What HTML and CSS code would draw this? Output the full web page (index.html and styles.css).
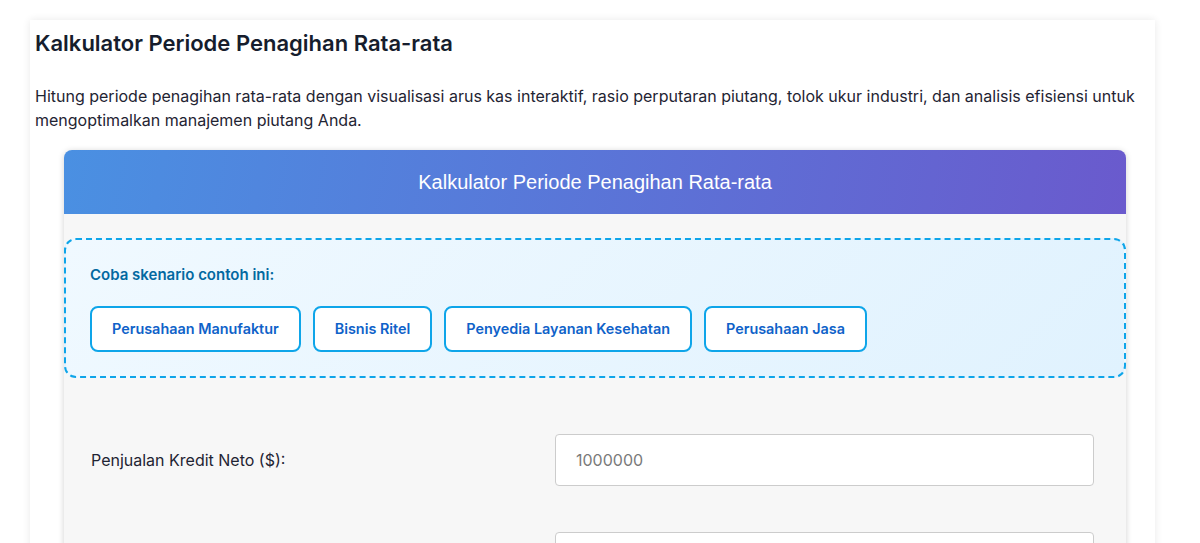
FILE: index.html
```html
<!DOCTYPE html>
<html lang="id">
<head>
<meta charset="utf-8">
<title>Kalkulator Periode Penagihan Rata-rata</title>
<link rel="stylesheet" href="styles.css">
</head>
<body>
<div class="page">
  <h1 class="page-title">Kalkulator Periode Penagihan Rata-rata</h1>
  <p class="page-desc">Hitung periode penagihan rata-rata dengan visualisasi arus kas interaktif, rasio perputaran piutang, tolok ukur industri, dan analisis efisiensi untuk mengoptimalkan manajemen piutang Anda.</p>

  <div class="calc-card">
    <div class="calc-header">Kalkulator Periode Penagihan Rata-rata</div>
    <div class="calc-body">
      <div class="scenarios">
        <div class="scenarios-label">Coba skenario contoh ini:</div>
        <div class="scenario-buttons">
          <button class="scenario-btn">Perusahaan Manufaktur</button>
          <button class="scenario-btn">Bisnis Ritel</button>
          <button class="scenario-btn">Penyedia Layanan Kesehatan</button>
          <button class="scenario-btn">Perusahaan Jasa</button>
        </div>
      </div>

      <div class="form">
        <div class="form-row">
          <label class="form-label">Penjualan Kredit Neto ($):</label>
          <input class="form-input" type="text" placeholder="1000000">
        </div>
        <div class="form-row">
          <label class="form-label">Piutang Usaha Awal ($):</label>
          <input class="form-input" type="text" placeholder="150000">
        </div>
        <div class="form-row">
          <label class="form-label">Piutang Usaha Akhir ($):</label>
          <input class="form-input" type="text" placeholder="170000">
        </div>
        <div class="form-row">
          <label class="form-label">Periode (hari):</label>
          <input class="form-input" type="text" placeholder="365">
        </div>
        <div class="form-row">
          <label class="form-label">Industri:</label>
          <input class="form-input" type="text" placeholder="Manufaktur">
        </div>
        <div class="form-actions">
          <button class="calc-btn">Hitung</button>
        </div>
      </div>

      <div class="results">
        <h2 class="results-title">Hasil</h2>
        <div class="result-grid">
          <div class="result-item"><div class="result-name">Periode Penagihan Rata-rata</div><div class="result-value">58,4 hari</div></div>
          <div class="result-item"><div class="result-name">Rasio Perputaran Piutang</div><div class="result-value">6,25x</div></div>
          <div class="result-item"><div class="result-name">Piutang Rata-rata</div><div class="result-value">$160.000</div></div>
          <div class="result-item"><div class="result-name">Tolok Ukur Industri</div><div class="result-value">45 hari</div></div>
        </div>
        <div class="chart-area">Visualisasi Arus Kas</div>
        <div class="chart-area">Analisis Efisiensi</div>
        <div class="chart-area">Perbandingan Industri</div>
      </div>
    </div>
  </div>

  <div class="info">
    <h2 class="info-title">Apa itu Periode Penagihan Rata-rata?</h2>
    <p class="info-text">Periode penagihan rata-rata adalah jumlah hari rata-rata yang dibutuhkan perusahaan untuk menerima pembayaran dari pelanggan atas penjualan kredit.</p>
    <div class="info-block"></div>
    <div class="info-block"></div>
    <div class="info-block"></div>
    <div class="info-block"></div>
    <div class="info-block"></div>
  </div>
</div>
</body>
</html>
```

FILE: styles.css
```css
* { box-sizing: border-box; }

body {
  margin: 0;
  padding: 20px 35px 20px 20px;
  background: #ffffff;
  font-family: Inter, "Noto Sans", sans-serif;
  color: #1f2433;
}

.page {
  max-width: 1125px;
  margin: 0 auto;
  padding: 5px;
  background: #ffffff;
  box-shadow: 0 0 8px rgba(0, 0, 0, 0.09);
}

.page-title {
  margin: 5px 0 28px;
  font-size: 22px;
  line-height: 26px;
  font-weight: 600;
  color: #161d2d;
}

.page-desc {
  margin: 0 0 18px;
  font-size: 16px;
  line-height: 24px;
  color: #1f2433;
}

.calc-card {
  margin: 0 24px 40px 29px;
  border-radius: 8px;
  background: #f7f7f7;
  box-shadow: 0 1px 6px rgba(0, 0, 0, 0.18);
  overflow: hidden;
}

.calc-header {
  padding: 20px;
  line-height: 24px;
  font-family: "Liberation Sans", Arial, sans-serif;
  font-size: 20px;
  color: #ffffff;
  text-align: center;
  background: linear-gradient(100deg, #4a90e2 0%, #6a5acd 100%);
}

.calc-body {
  padding: 24px 0 30px;
}

.scenarios {
  border: 2px dashed #0ea5e9;
  border-radius: 12px;
  background: linear-gradient(135deg, #f0f9ff 0%, #e0f2fe 100%);
  padding: 24px;
}

.scenarios-label {
  font-size: 15px;
  line-height: 20px;
  font-weight: 600;
  color: #0369a1;
  margin: 1px 0 21px;
}

.scenario-buttons {
  display: flex;
  flex-wrap: wrap;
  gap: 12px;
}

.scenario-btn {
  font-family: Inter, "Noto Sans", sans-serif;
  font-size: 14.4px;
  line-height: 18px;
  font-weight: 600;
  color: #0f62c9;
  background: #ffffff;
  border: 2px solid #0ea5e9;
  border-radius: 8px;
  padding: 12px 20px;
}

.form {
  padding-top: 33px;
}

.form-row {
  display: flex;
  align-items: center;
  padding: 23px 32px 23px 27px;
}

.form-label {
  flex: 1;
  font-size: 16px;
  line-height: 24px;
  color: #1f2433;
}

.form-input {
  width: 539px;
  height: 52px;
  padding: 0 20px;
  border: 1px solid #cccccc;
  border-radius: 4px;
  background: #ffffff;
  font-family: Inter, "Noto Sans", sans-serif;
  font-size: 16px;
}

.form-input::placeholder { color: #7a7a7a; }

.form-actions {
  padding: 23px 32px 23px 27px;
}

.calc-btn {
  width: 100%;
  padding: 14px;
  border: none;
  border-radius: 6px;
  background: linear-gradient(100deg, #4a90e2, #6a5acd);
  color: #ffffff;
  font-family: Inter, "Noto Sans", sans-serif;
  font-size: 16px;
  font-weight: 600;
}

.results {
  padding: 20px 32px 0 27px;
}

.results-title {
  margin: 0 0 16px;
  font-size: 18px;
  font-weight: 600;
}

.result-grid {
  display: grid;
  grid-template-columns: repeat(2, 1fr);
  gap: 16px;
  margin-bottom: 24px;
}

.result-item {
  background: #ffffff;
  border-radius: 8px;
  padding: 16px;
  box-shadow: 0 1px 3px rgba(0, 0, 0, 0.1);
}

.result-name { font-size: 14px; color: #555b6e; }
.result-value { font-size: 22px; font-weight: 700; color: #0369a1; margin-top: 6px; }

.chart-area {
  height: 400px;
  margin-bottom: 24px;
  background: #ffffff;
  border-radius: 8px;
  padding: 16px;
  font-weight: 600;
}

.info { padding: 0 29px 40px; }
.info-title { font-size: 20px; font-weight: 600; }
.info-text { font-size: 16px; line-height: 24px; }
.info-block { height: 600px; }
```
